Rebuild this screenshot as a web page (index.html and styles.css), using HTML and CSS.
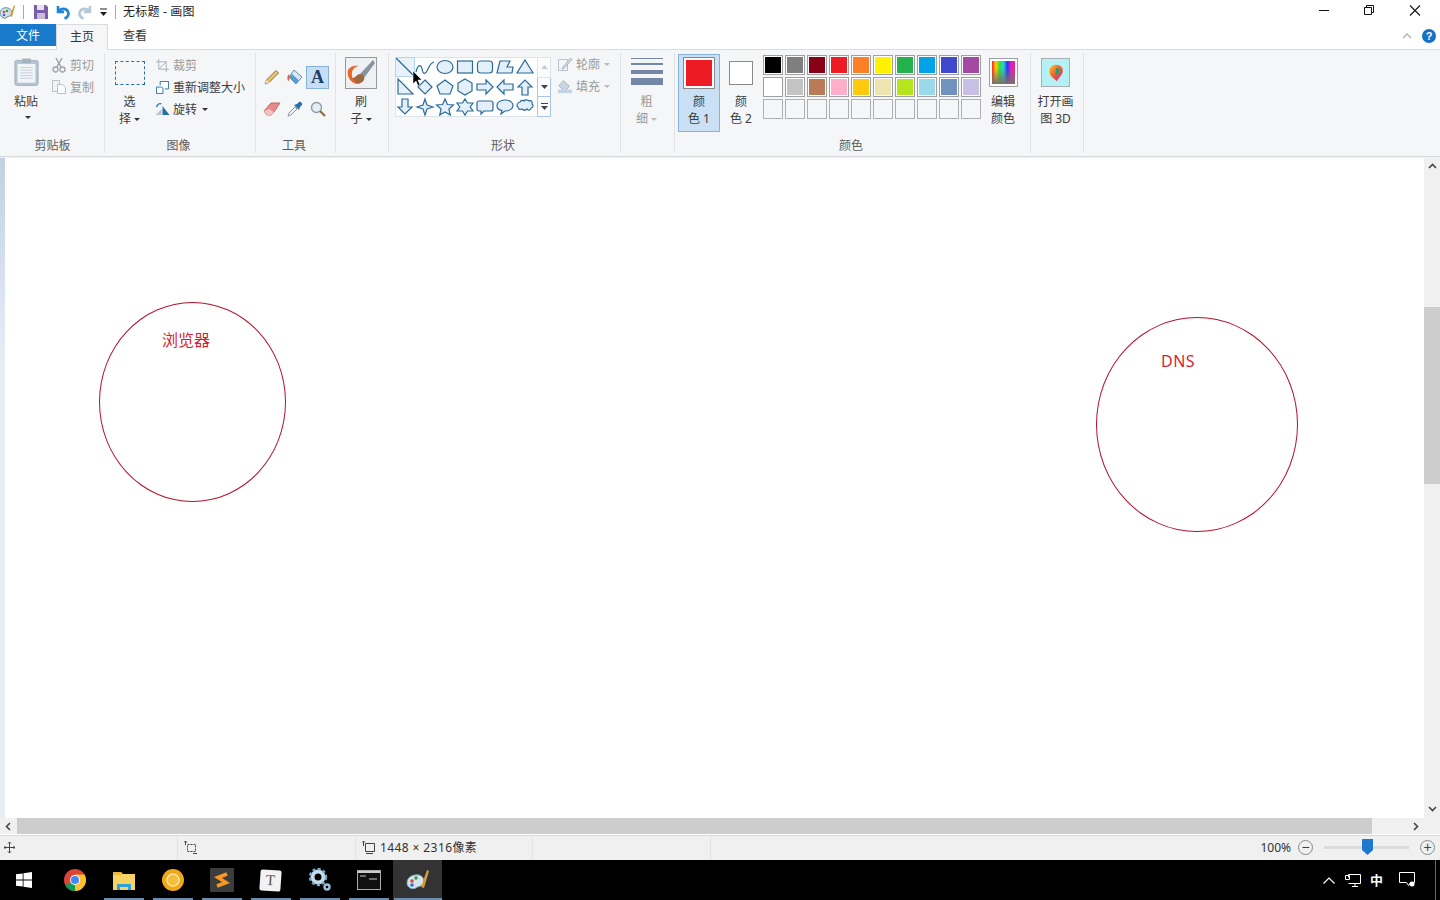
FILE: index.html
```html
<!DOCTYPE html>
<html lang="zh">
<head>
<meta charset="utf-8">
<title>无标题 - 画图</title>
<link rel="stylesheet" href="styles.css">
</head>
<body>
<div class="app">
  <header class="titlebar">
    <div class="qat">
      <svg class="ic-app" viewBox="0 0 18 18" width="18" height="18"><path d="M1 10c0-4 4-6 8-5 3 1 5 4 3 7-2 2-4 1-5 3-2 1-6-1-6-5z" fill="#cfe0e8" stroke="#5a8aa0"/><circle cx="5" cy="9" r="1.3" fill="#d84a3a"/><circle cx="8" cy="8" r="1.3" fill="#3a9a4a"/><circle cx="5" cy="12" r="1.3" fill="#3a6ad8"/><path d="M11 13l4-11 1 1-3 11z" fill="#d79a3a"/></svg>
      <span class="qat-sep first"></span>
      <svg viewBox="0 0 16 16" width="16" height="16"><path d="M1 1h12l2 2v12H1z" fill="#7a5fa8"/><path d="M4 1h7v5H4z" fill="#e8e2f0"/><path d="M4 9h8v6H4z" fill="#c9bcdc"/></svg>
      <svg viewBox="0 0 16 16" width="16" height="16"><path d="M3 2v6h6M3.500 7.500C6 4 11 4 13 7.500c1.500 3-.5 6-3.500 7" fill="none" stroke="#1e88d8" stroke-width="2.600"/></svg>
      <svg viewBox="0 0 16 16" width="16" height="16"><path d="M13 2v6H7M12.500 7.500C10 4 5 4 3 7.500c-1.500 3 .5 6 3.500 7" fill="none" stroke="#b4c8d8" stroke-width="2.600"/></svg>
      <svg viewBox="0 0 9 9" width="9" height="9"><path d="M1 1h7" stroke="#222"/><path d="M1 4h7L4.500 8z" fill="#222"/></svg>
      <span class="qat-sep"></span>
    </div>
    <div class="title-text">无标题 - 画图</div>
    <div class="win-btns">
      <svg viewBox="0 0 46 24" width="46" height="24"><path d="M19 10.500h10" stroke="#111"/></svg>
      <svg viewBox="0 0 46 24" width="46" height="24"><path d="M18.500 7.500h7v7h-7zM20.500 7.500v-2h7v7h-2" fill="none" stroke="#111"/></svg>
      <svg viewBox="0 0 46 24" width="46" height="24"><path d="M18 5.500l10 10M28 5.500l-10 10" stroke="#111" stroke-width="1.100"/></svg>
    </div>
  </header>

  <nav class="tabs">
    <div class="tab tab-file">文件</div>
    <div class="tab tab-active">主页</div>
    <div class="tab tab-view">查看</div>
    <div class="tabs-right">
      <svg viewBox="0 0 10 6" width="10" height="6"><path d="M1 5l4-4 4 4" fill="none" stroke="#aab4bc" stroke-width="1.400"/></svg>
      <span class="help">?</span>
    </div>
  </nav>

  <section class="ribbon">
    <div class="group g-clip">
      <div class="group-body clip-body">
        <div class="big-btn paste">
          <svg viewBox="0 0 28 32" width="25" height="30"><rect x="1" y="3" width="26" height="28" rx="2" fill="#b4c3d2" stroke="#a0aebb"/><rect x="4" y="7" width="20" height="21" fill="#f2f5f8"/><path d="M7 11h14M7 14h14M7 17h14M7 20h14M7 23h14" stroke="#c3ced8"/><rect x="9" y="1" width="10" height="5" rx="1" fill="#a5b3c0"/></svg>
          <span class="lbl">粘贴</span>
          <span class="caret solo"></span>
        </div>
        <div class="small-col clip-col">
          <div class="small-btn dim"><svg viewBox="-1 0 16 16" width="16" height="16"><path d="M4 1l5 9M10 1L5 10" stroke="#9aa4ad" stroke-width="1.500"/><circle cx="3.500" cy="12.500" r="2.500" fill="none" stroke="#9aa4ad" stroke-width="1.300"/><circle cx="10.500" cy="12.500" r="2.500" fill="none" stroke="#9aa4ad" stroke-width="1.300"/></svg><span>剪切</span></div>
          <div class="small-btn dim"><svg viewBox="0 0 16 16" width="16" height="16"><path d="M1.500 1.500h7v11h-7z" fill="#f0f2f4" stroke="#b8c0c8"/><path d="M6.500 5.500h5l3 3v6h-8z" fill="#fafbfc" stroke="#b8c0c8"/></svg><span>复制</span></div>
        </div>
      </div>
      <div class="group-name name-clip">剪贴板</div>
    </div>

    <div class="group g-image">
      <div class="group-body image-body">
        <div class="big-btn select">
          <span class="marquee"></span>
          <span class="lbl">选</span>
          <span class="lbl">择<i class="caret"></i></span>
        </div>
        <div class="small-col image-col">
          <div class="small-btn dim"><svg class="ic-narrow" viewBox="0 0 14 14" width="13" height="13"><path d="M3 0v11h11M0 3h11v11M3 11l8-8" fill="none" stroke="#a3b0bc"/></svg><span>裁剪</span></div>
          <div class="small-btn"><svg class="ic-narrow" viewBox="0 0 14 14" width="13" height="13"><path d="M.5 6.500h7v7h-7z" fill="#fff" stroke="#2a72b0"/><path d="M4.500 4.500v-4h9v8h-4" fill="#fff" stroke="#2a72b0"/></svg><span>重新调整大小</span></div>
          <div class="small-btn"><svg class="ic-wide" viewBox="0 0 16 14" width="17" height="14"><path d="M8 13V4l7 9z" fill="#2a6ea8"/><path d="M7 13V7l-6 6z" fill="#b8c4ce"/><path d="M2 5c1-3 3-4 5-3" fill="none" stroke="#2a6ea8" stroke-width="1.300"/></svg><span>旋转</span><i class="caret"></i></div>
        </div>
      </div>
      <div class="group-name">图像</div>
    </div>

    <div class="group g-tools">
      <div class="group-body tools-grid">
        <div class="tool"><svg viewBox="0 0 16 16" width="16" height="16"><path d="M1 15l1.500-4L12 1.500 14.500 4 5 13.500z" fill="#e9c46a" stroke="#7a6238" stroke-width=".9"/><path d="M1 15l1.500-4L5 13.500z" fill="#f4e2c4"/></svg></div>
        <div class="tool"><svg viewBox="0 0 18 18" width="18" height="18"><path d="M8 2l8 7-6 7-7-7z" fill="#dbe8f2" stroke="#6a8ea8"/><path d="M3 9l7 7 3-3.500L6 6z" fill="#5d9ad0"/><path d="M3 6c-2 2-2 5-1 7 1 0 2-2 1-7z" fill="#e0603a"/></svg></div>
        <div class="tool tool-on"><span class="a-glyph">A</span></div>
        <div class="tool"><svg viewBox="0 0 18 14" width="18" height="14"><path d="M1 9l7-8h9l-6 9-3 3H4z" fill="#e88a8a" stroke="#bb6a6a"/><path d="M1 9l3 4h4l3-3-5-3z" fill="#f2c4bc"/></svg></div>
        <div class="tool"><svg viewBox="0 0 16 16" width="16" height="16"><path d="M1 15l1-3 6-6 2 2-6 6z" fill="#eef2f6" stroke="#8a9aa8"/><path d="M7 4l5 5 1-3 2-2c1-2-2-4-3-3l-2 2z" fill="#2c6fa8"/></svg></div>
        <div class="tool"><svg viewBox="0 0 16 16" width="16" height="16"><circle cx="6.500" cy="6.500" r="5" fill="#e4eef6" stroke="#8a9aa8" stroke-width="1.300"/><path d="M10 10l5 5" stroke="#8a6a40" stroke-width="2"/></svg></div>
      </div>
      <div class="group-name">工具</div>
    </div>

    <div class="group g-brush">
      <div class="group-body brush-body">
        <div class="brush-tile"><svg viewBox="0 0 30 30" width="30" height="30"><rect width="30" height="30" fill="#eef0f2"/><path d="M14 16L27 2l2 3-11 15z" fill="#8a94a0"/><path d="M3 20C6 26 14 28 18 22c1-3-1-6-4-6-4 0-3 5-11 4z" fill="#9a6a40"/><path d="M2 12c-2 8 5 15 12 14-6-3-9-6-8-12 1-4 5-6 7-6-4-1-9 0-11 4z" fill="#e8662a"/></svg></div>
        <span class="lbl">刷</span>
        <span class="lbl">子<i class="caret"></i></span>
      </div>
      <div class="group-name">&nbsp;</div>
    </div>

    <div class="group g-shapes">
      <div class="group-body shapes-body">
        <div class="gallery">
          <div class="shape-grid">
            <div class="shape sel"><svg viewBox="0 0 20 20"><path d="M1 1l18 18" class="ln"/></svg></div>
            <div class="shape"><svg viewBox="0 0 20 20"><path d="M1 15c2-8 5-8 6-3s3 6 5 2 3-8 7-9" class="ln"/></svg></div>
            <div class="shape"><svg viewBox="0 0 20 20"><ellipse cx="10" cy="10" rx="8" ry="6.500" class="fl"/></svg></div>
            <div class="shape"><svg viewBox="0 0 20 20"><rect x="2.500" y="4" width="15" height="12" class="fl"/></svg></div>
            <div class="shape"><svg viewBox="0 0 20 20"><rect x="2.500" y="4" width="15" height="12" rx="3" class="fl"/></svg></div>
            <div class="shape"><svg viewBox="0 0 20 20"><path d="M5 4h10l-3 6h6l-1 6H2z" class="fl"/></svg></div>
            <div class="shape"><svg viewBox="0 0 20 20"><path d="M10 3l8 13H2z" class="fl"/></svg></div>
            <div class="shape"><svg viewBox="0 0 20 20"><path d="M3 2v15h15z" class="fl"/></svg></div>
            <div class="shape"><svg viewBox="0 0 20 20"><path d="M10 3l7 7-7 7-7-7z" class="fl"/></svg></div>
            <div class="shape"><svg viewBox="0 0 20 20"><path d="M10 3l8 6-3 8H5L2 9z" class="fl"/></svg></div>
            <div class="shape"><svg viewBox="0 0 20 20"><path d="M10 2l7 4v8l-7 4-7-4V6z" class="fl"/></svg></div>
            <div class="shape"><svg viewBox="0 0 20 20"><path d="M2 7h9V3l7 7-7 7v-4H2z" class="fl"/></svg></div>
            <div class="shape"><svg viewBox="0 0 20 20"><path d="M18 7H9V3l-7 7 7 7v-4h9z" class="fl"/></svg></div>
            <div class="shape"><svg viewBox="0 0 20 20"><path d="M7 18V10H3l7-7 7 7h-4v8z" class="fl"/></svg></div>
            <div class="shape"><svg viewBox="0 0 20 20"><path d="M7 2v8H3l7 7 7-7h-4V2z" class="fl"/></svg></div>
            <div class="shape"><svg viewBox="0 0 20 20"><path d="M10 2l2 6 6 2-6 2-2 6-2-6-6-2 6-2z" class="fl"/></svg></div>
            <div class="shape"><svg viewBox="0 0 20 20"><path d="M10 2l2.400 5.500 6 .5-4.500 4 1.400 6L10 15l-5.300 3 1.400-6L1.600 8l6-.5z" class="fl"/></svg></div>
            <div class="shape"><svg viewBox="0 0 20 20"><path d="M10 2l2.500 4H18l-2.800 4 2.800 4h-5.500L10 18l-2.500-4H2l2.800-4L2 6h5.500z" class="fl"/></svg></div>
            <div class="shape"><svg viewBox="0 0 20 20"><path d="M4 4h12a2 2 0 012 2v6a2 2 0 01-2 2H9l-3 3v-3H4a2 2 0 01-2-2V6a2 2 0 012-2z" class="fl"/></svg></div>
            <div class="shape"><svg viewBox="0 0 20 20"><path d="M10 3c5 0 8 2.500 8 5.500S15 14 10 14l-4 3 1-3.500C4 13 2 11 2 8.500 2 5.500 5 3 10 3z" class="fl"/></svg></div>
            <div class="shape"><svg viewBox="0 0 20 20"><path d="M5 5c1-2 3-2 4-1 1-2 4-1 5 0 2-1 4 1 3 3 2 1 1 4-1 4 0 2-3 3-4 1-2 2-4 1-5 0-2 1-4 0-4-2-2-1-1-4 2-5z" class="fl"/></svg></div>
          </div>
          <div class="gallery-scroll">
            <div class="gs gs-up"><svg viewBox="0 0 7 4" width="7" height="4"><path d="M3.500 0L7 4H0z" fill="#c4ccd4"/></svg></div>
            <div class="gs"><svg viewBox="0 0 7 4" width="7" height="4"><path d="M0 0h7L3.500 4z" fill="#444"/></svg></div>
            <div class="gs"><svg viewBox="0 0 7 7" width="7" height="7"><path d="M0 .5h7" stroke="#444"/><path d="M0 3h7L3.500 7z" fill="#444"/></svg></div>
          </div>
        </div>
        <div class="small-col shape-opts">
          <div class="small-btn dim"><svg viewBox="0 0 16 16" width="16" height="16"><path d="M1.500 3.500h9v11h-9z" fill="none" stroke="#b4c0cc"/><path d="M6 11l-1 2 2-.5 8-9-1.500-1.500z" fill="#d8dfe6" stroke="#a8b4c0"/></svg><span>轮廓</span><i class="caret dim-caret"></i></div>
          <div class="small-btn dim"><svg viewBox="0 0 18 16" width="16" height="16"><path d="M7 2l7 6-5 6-7-6z" fill="#c8d6e4" stroke="#a4b4c4"/><rect x="1" y="12" width="16" height="4" fill="#c4d2e2"/></svg><span>填充</span><i class="caret dim-caret"></i></div>
        </div>
      </div>
      <div class="group-name">形状</div>
    </div>

    <div class="group g-size">
      <div class="group-body size-body">
        <div class="size-lines"><i class="l1"></i><i class="l2"></i><i class="l3"></i><i class="l4"></i></div>
        <span class="lbl dim-text">粗</span>
        <span class="lbl dim-text">细<i class="caret dim-caret"></i></span>
      </div>
      <div class="group-name">&nbsp;</div>
    </div>

    <div class="group g-colors">
      <div class="group-body colors-body">
        <div class="color-big on">
          <span class="swatch-big sb1"><i></i></span>
          <span class="lbl">颜</span>
          <span class="lbl">色 1</span>
        </div>
        <div class="color-big">
          <span class="swatch-big sb2"><i></i></span>
          <span class="lbl">颜</span>
          <span class="lbl">色 2</span>
        </div>
        <div class="palette">
          <span class="c c01"></span><span class="c c02"></span><span class="c c03"></span><span class="c c04"></span><span class="c c05"></span><span class="c c06"></span><span class="c c07"></span><span class="c c08"></span><span class="c c09"></span><span class="c c10"></span>
          <span class="c c11"></span><span class="c c12"></span><span class="c c13"></span><span class="c c14"></span><span class="c c15"></span><span class="c c16"></span><span class="c c17"></span><span class="c c18"></span><span class="c c19"></span><span class="c c20"></span>
          <span class="c e"></span><span class="c e"></span><span class="c e"></span><span class="c e"></span><span class="c e"></span><span class="c e"></span><span class="c e"></span><span class="c e"></span><span class="c e"></span><span class="c e"></span>
        </div>
        <div class="edit-colors">
          <span class="rainbow"><i></i></span>
          <span class="lbl">编辑</span>
          <span class="lbl">颜色</span>
        </div>
      </div>
      <div class="group-name">颜色</div>
    </div>

    <div class="group g-3d">
      <div class="group-body p3d-body">
        <span class="p3d-tile"><svg viewBox="0 0 24 24" width="20" height="24"><defs><linearGradient id="p3d" x1="0" y1="0" x2="1" y2="1"><stop offset="0" stop-color="#f7d02c"/><stop offset=".45" stop-color="#f0642c"/><stop offset="1" stop-color="#c02ca0"/></linearGradient></defs><path d="M12 2c6 0 9 4 8 9-1 4-5 7-7 11-3-3-9-6-9-12 0-5 4-8 8-8z" fill="url(#p3d)"/><path d="M12 6c3 0 5 2 4 5-1 2-3 2-4 4z" fill="#2a9c6a"/></svg></span>
        <span class="lbl">打开画</span>
        <span class="lbl">图 3D</span>
      </div>
      <div class="group-name">&nbsp;</div>
    </div>
  </section>

  <main class="workspace">
    <div class="canvas-row">
      <div class="canvas-edge"></div>
      <div class="canvas">
        <div class="shape-circle circle-a"></div>
        <div class="shape-circle circle-b"></div>
        <div class="canvas-label label-a">浏览器</div>
        <div class="canvas-label label-b">DNS</div>
      </div>
      <div class="vscroll">
        <svg viewBox="0 0 9 6" width="9" height="6"><path d="M1 5l3.500-3.500L8 5" fill="none" stroke="#444" stroke-width="1.600"/></svg>
        <div class="vtrack"><div class="vthumb"></div></div>
        <svg viewBox="0 0 9 6" width="9" height="6"><path d="M1 1l3.500 3.500L8 1" fill="none" stroke="#444" stroke-width="1.600"/></svg>
      </div>
    </div>
    <div class="hscroll">
      <svg viewBox="0 0 6 9" width="6" height="9"><path d="M5 1L1.500 4.500 5 8" fill="none" stroke="#444" stroke-width="1.600"/></svg>
      <div class="htrack"><div class="hthumb"></div></div>
      <svg viewBox="0 0 6 9" width="6" height="9"><path d="M1 1l3.500 3.500L1 8" fill="none" stroke="#444" stroke-width="1.600"/></svg>
    </div>
  </main>

  <footer class="status">
    <div class="st st1"><svg viewBox="0 0 11 11" width="11" height="11"><path d="M5.500 0v11M0 5.500h11M4 1.500L5.500 0 7 1.500M4 9.500L5.500 11 7 9.500M1.500 4L0 5.500 1.500 7M9.500 4L11 5.500 9.500 7" fill="none" stroke="#444"/></svg></div>
    <div class="st st2"><svg viewBox="0 0 13 13" width="13" height="13"><path d="M3.500 3.500h8v7h-8z" fill="none" stroke="#444" stroke-dasharray="2 1"/><path d="M1.500 0v4M0 1.500L1.500 0 3 1.500M9 12.500h4" stroke="#444" fill="none"/></svg></div>
    <div class="st st3"><svg viewBox="0 0 13 13" width="13" height="13"><path d="M3.500 2.500h9v8h-9z" fill="none" stroke="#444"/><path d="M1.500 0v5M0 1.500L1.500 0 3 1.500M4 12.500h7" stroke="#444" fill="none"/></svg><span class="dims">1448 × 2316像素</span></div>
    <div class="st st4"></div>
    <div class="st st5"></div>
    <div class="zoom">
      <span class="zoom-val">100%</span>
      <span class="zbtn">−</span>
      <div class="zslider"><svg class="zthumb" viewBox="0 0 11 16" width="11" height="16"><path d="M0 0h11v11l-5.500 5L0 11z" fill="#1f78d0"/></svg></div>
      <span class="zbtn">+</span>
    </div>
  </footer>

  <div class="taskbar">
    <div class="tb start"><svg viewBox="0 0 16 16" width="16" height="16"><path d="M0 2.300l6.700-.9v6.200H0zM7.500 1.300L16 0v7.600H7.500zM0 8.400h6.700v6.200L0 13.700zM7.500 8.400H16V16l-8.500-1.200z" fill="#fff"/></svg></div>
    <div class="tb"><svg viewBox="0 0 22 22" width="22" height="22"><circle cx="11" cy="11" r="11" fill="#db4437"/><path d="M11 11L1.500 16.500A11 11 0 0 0 11 22z" fill="#0f9d58"/><path d="M11 22a11 11 0 0 0 11-11 11 11 0 0 0-1.500-5.500H11z" fill="#fbc02d"/><path d="M11 11l-9.500 5.500A11 11 0 0 0 9 21.800z" fill="#0f9d58"/><circle cx="11" cy="11" r="5" fill="#fff"/><circle cx="11" cy="11" r="4" fill="#4285f4"/></svg></div>
    <div class="tb run"><svg viewBox="0 0 22 20" width="22" height="20"><path d="M0 2h8l2 2h12v16H0z" fill="#f6d365"/><path d="M0 2h8l1 3H0z" fill="#e8b93a"/><path d="M4 20v-6h14v6h-3v-3H7v3z" fill="#2ba2dc"/></svg></div>
    <div class="tb run"><svg viewBox="0 0 22 22" width="22" height="22"><circle cx="11" cy="11" r="11" fill="#f0a818"/><circle cx="11" cy="11" r="6" fill="#f6bd3c" stroke="#fbe6a8" stroke-width="1.500"/></svg></div>
    <div class="tb run"><svg viewBox="0 0 24 24" width="24" height="24"><rect width="24" height="24" rx="1" fill="#3c3c3c"/><path d="M17 6L8 9.500l8 5L7 18" fill="none" stroke="#f89820" stroke-width="3.600"/></svg></div>
    <div class="tb run"><div class="typora">T</div></div>
    <div class="tb run"><svg viewBox="0 0 24 24" width="24" height="24"><circle cx="10" cy="9" r="5.500" fill="none" stroke="#c4dcec" stroke-width="4"/><circle cx="10" cy="9" r="8" fill="none" stroke="#7fa8c4" stroke-width="2.400" stroke-dasharray="3 2.300"/><circle cx="19" cy="19" r="2.500" fill="none" stroke="#9cc0d8" stroke-width="2.400"/></svg></div>
    <div class="tb run"><svg viewBox="0 0 24 20" width="24" height="20"><rect x=".5" y=".5" width="23" height="19" fill="#111" stroke="#aaa"/><rect x="1" y="1" width="22" height="2" fill="#ccc"/><path d="M3 6h6M12 9h8" stroke="#ccc"/></svg></div>
    <div class="tb run active"><svg viewBox="0 0 24 24" width="24" height="24"><path d="M1 15c0-6 6-9 12-8 4 1 6 5 4 9-2 3-5 2-7 4-3 2-9 0-9-5z" fill="#d4e4ec" stroke="#7ca0b4"/><circle cx="6" cy="13" r="1.800" fill="#d84a3a"/><circle cx="10" cy="10" r="1.800" fill="#3a9a4a"/><circle cx="6" cy="17" r="1.800" fill="#3a6ad8"/><path d="M15 19L21 2l2 1-5 17z" fill="#d79a3a"/></svg></div>
    <div class="tray">
      <svg viewBox="0 0 12 7" width="12" height="7"><path d="M.5 6.500L6 1l5.500 5.500" fill="none" stroke="#fff" stroke-width="1.200"/></svg>
      <svg viewBox="0 0 16 13" width="16" height="13"><path d="M3.500 3.500v-3h12v9h-12M.5 1.500h4v4h-4zM7 12.500h6M10 9.500v3" fill="none" stroke="#fff"/></svg>
      <span class="ime">中</span>
      <svg class="notif" viewBox="0 0 17 16" width="17" height="16"><path d="M.5.500h15v10h-4l-2 3-2-3h-7z" fill="none" stroke="#fff"/><circle cx="13" cy="12" r="2.500" fill="#fff"/></svg>
    </div>
  </div>

  <svg class="cursor" viewBox="0 0 11 17" width="11" height="17"><path d="M1 1v13l3-3 2 5 2-1-2-5h4z" fill="#000" stroke="#fff" stroke-width=".6"/></svg>
</div>
</body>
</html>
```

FILE: styles.css
```css
* { box-sizing: border-box; }
html, body { margin: 0; height: 100%; }
body { font-family: "Noto Sans", "Noto Sans CJK SC", "Liberation Sans", sans-serif; font-size: 12px; color: #3c3c3c; background: #fff; overflow: hidden; }
.app { position: relative; width: 1440px; height: 900px; display: flex; flex-direction: column; overflow: hidden; }

.titlebar { height: 24px; flex: none; display: flex; align-items: center; background: #fff; }
.qat { display: flex; align-items: center; gap: 6px; margin-left: -1px; }
.qat-sep { width: 1px; height: 14px; background: #a8a8a8; margin: 0 1px; }
.qat-sep.first { margin: 0 3px 0 0; }
.title-text { margin-left: 6px; color: #222; line-height: 22px; flex: 1; letter-spacing: .2px; }
.win-btns { display: flex; margin-right: 2px; }

.tabs { height: 26px; flex: none; display: flex; background: #fff; border-bottom: 1px solid #dadbdc; }
.tab { height: 26px; line-height: 24px; text-align: center; color: #333; }
.tab-file { width: 56px; height: 22px; background: #1979ca; color: #fff; }
.tab-active { width: 52px; background: #f5f6f7; border: 1px solid #dadbdc; border-bottom: 0; position: relative; }
.tab-view { width: 54px; }
.tabs-right { margin-left: auto; display: flex; align-items: center; gap: 10px; height: 24px; padding-right: 4px; }
.help { width: 14px; height: 14px; border-radius: 50%; background: #1770c4; color: #fff; font: bold 11px/14px "Liberation Sans", sans-serif; text-align: center; }

.ribbon { height: 107px; flex: none; display: flex; background: #f5f6f7; border-bottom: 1px solid #dadbdc; }
.group { flex: none; height: 100%; display: flex; flex-direction: column; position: relative; }
.group::after { content: ""; position: absolute; right: 0; top: 3px; bottom: 3px; width: 1px; background: #e2e3e4; }
.group-body { flex: 1; min-height: 0; }
.group-name { height: 20px; flex: none; line-height: 20px; text-align: center; color: #5c5c5c; padding-right: 4px; }
.name-clip { padding-right: 0; }
.lbl { display: block; line-height: 17px; text-align: center; color: #3c3c3c; white-space: nowrap; }
.dim-text { color: #9a9a9a; }

.caret { display: inline-block; width: 0; height: 0; border: 3px solid transparent; border-top: 3px solid #333; border-bottom: 0; margin-left: 3px; vertical-align: 2px; }
.caret.solo { display: block; margin: 6px auto 0; transform: translateX(2px); }
.dim-caret { border-top-color: #bbb; }

.small-col { display: flex; flex-direction: column; }
.small-btn { height: 22px; display: flex; align-items: center; gap: 3px; white-space: nowrap; color: #3c3c3c; }
.small-btn .caret { margin-left: 1px; }
.small-btn.dim { color: #9a9a9a; }

.g-clip { width: 105px; }
.clip-body { display: flex; padding-top: 7px; }
.big-btn { display: flex; flex-direction: column; align-items: center; }
.paste { width: 52px; }
.paste .lbl { margin-top: 6px; }
.clip-col { margin: -3px 0 0 -1px; }

.g-image { width: 151px; }
.image-body { display: flex; padding: 7px 0 0 9px; }
.select { width: 31px; }
.marquee { width: 30px; height: 24px; border: 1px dashed #2a6ea8; margin: 4px 0 8px; }
.image-col { margin: -3px 0 0 10px; }
.image-col .small-btn { gap: 4px; }
.ic-narrow { margin-left: 1px; }
.ic-wide { margin: 0 -2px 0 -1px; }

.g-tools { width: 80px; }
.tools-grid { display: grid; grid-template-columns: repeat(3, 23px); grid-auto-rows: 32px; justify-items: center; align-items: center; padding: 11px 0 0 4px; align-content: start; }
.tool { width: 23px; height: 23px; display: flex; align-items: center; justify-content: center; }
.tool-on { background: #c8dff3; border: 1px solid #86b3dc; }
.a-glyph { font: bold 18px/21px "Liberation Serif", serif; color: #1f3d66; }

.g-brush { width: 53px; }
.brush-body { display: flex; flex-direction: column; align-items: center; padding: 7px 3px 0 0; }
.brush-tile { width: 32px; height: 32px; border: 1px solid #9a9a9a; margin-bottom: 4px; display: block; overflow: hidden; }

.g-shapes { width: 232px; }
.shapes-body { display: flex; padding: 7px 0 0 6px; }
.gallery { display: flex; flex: none; width: 156px; height: 60px; background: #fff; border: 1px solid #dce3ea; }
.shape-grid { width: 142px; flex: none; display: grid; grid-template-columns: repeat(7, 20px); grid-auto-rows: 20px; align-content: start; margin: -1px 0 0 -1px; }
.shape { display: flex; align-items: center; justify-content: center; height: 20px; width: 20px; }
.shape svg { width: 20px; height: 20px; display: block; }
.shape.sel { background: #e8f2fb; outline: 1px solid #b6d2ec; outline-offset: -1px; }
.fl { fill: #e4f0f9; stroke: #2c6a98; stroke-width: 1.200; }
.ln { fill: none; stroke: #2c6a98; stroke-width: 1.200; }
.gallery-scroll { width: 14px; flex: none; display: flex; flex-direction: column; margin-top: -1px; height: 60px; }
.gs { flex: 1; border: 1px solid #a9c6e2; border-top-width: 0; background: #fbfcfd; display: flex; align-items: center; justify-content: center; }
.gs-up { border-color: #e0e4e8; border-top-width: 1px; }
.shape-opts { margin: -4px 0 0 6px; }

.g-size { width: 54px; }
.size-body { display: flex; flex-direction: column; align-items: center; padding: 8px 3px 0 0; }
.size-lines { width: 32px; height: 27px; display: flex; flex-direction: column; margin-bottom: 8px; }
.size-lines i { display: block; background: #7487a6; }
.l1 { height: 1px; }
.l2 { height: 2px; margin-top: 4px; }
.l3 { height: 4px; margin-top: 5px; }
.l4 { height: 7px; margin-top: 4px; }

.g-colors { width: 356px; }
.colors-body { display: flex; padding: 4px 0 0 3px; }
.color-big { width: 42px; height: 78px; display: flex; flex-direction: column; align-items: center; border: 1px solid transparent; padding-top: 2px; }
.color-big.on { background: #c9e0f5; border-color: #86b3dc; }
.swatch-big { display: block; border: 1px solid #8a8a8a; background: #fff; }
.swatch-big i { display: block; width: 100%; height: 100%; }
.sb1 { width: 32px; height: 32px; padding: 2px; margin-bottom: 4px; }
.sb1 i { background: #ed1c24; }
.sb2 { width: 24px; height: 24px; margin: 4px 0 8px; }
.palette { display: grid; grid-template-columns: repeat(10, 20px); grid-auto-rows: 20px; gap: 2px; margin-left: 1px; padding-top: 1px; align-content: start; }
.c { display: block; width: 20px; height: 20px; border: 1px solid #a0a0a0; box-shadow: inset 0 0 0 1px #fff; background: #f5f6f7; }
.e { box-shadow: none; border-color: #b0b0b0; }
.c01 { background: #000; } .c02 { background: #7f7f7f; } .c03 { background: #880015; } .c04 { background: #ed1c24; } .c05 { background: #ff7f27; } .c06 { background: #fff200; } .c07 { background: #22b14c; } .c08 { background: #00a2e8; } .c09 { background: #3f48cc; } .c10 { background: #a349a4; }
.c11 { background: #fff; } .c12 { background: #c3c3c3; } .c13 { background: #b97a57; } .c14 { background: #ffaec9; } .c15 { background: #ffc90e; } .c16 { background: #efe4b0; } .c17 { background: #b5e61d; } .c18 { background: #99d9ea; } .c19 { background: #7092be; } .c20 { background: #c8bfe7; }
.edit-colors { width: 44px; padding-top: 4px; display: flex; flex-direction: column; align-items: center; }
.rainbow { display: block; width: 29px; height: 29px; border: 1px solid #a0a0a0; padding: 2px; background: #fff; margin-bottom: 6px; }
.rainbow i { display: block; width: 100%; height: 100%; background: linear-gradient(to bottom, rgba(128,128,128,0) 30%, #77706a 100%), linear-gradient(to right, #ff2020, #ffd000, #30e030, #20d0e0, #3030f0, #e020d0, #ff2060); }

.g-3d { width: 53px; }
.p3d-body { display: flex; flex-direction: column; align-items: center; padding: 8px 4px 0 0; }
.p3d-tile { width: 29px; height: 29px; background: #b4f0f4; border: 1px solid #a8b0b4; display: flex; align-items: center; justify-content: center; margin-bottom: 6px; }

.workspace { flex: 1; min-height: 0; display: flex; flex-direction: column; background: #f0f0f0; padding-top: 1px; }
.canvas-row { flex: 1; min-height: 0; display: flex; }
.canvas-edge { width: 5px; flex: none; background: linear-gradient(to bottom, #c2d0e2, #e6edf7 30%, #e6edf7); }
.canvas { flex: 1; position: relative; background: #fff; }
.shape-circle { position: absolute; border: 1px solid #b5122e; border-radius: 50%; }
.circle-a { left: 94px; top: 144px; width: 187px; height: 200px; }
.circle-b { left: 1091px; top: 159px; width: 202px; height: 215px; }
.canvas-label { position: absolute; color: #d81e30; font-size: 16px; line-height: 22px; white-space: nowrap; }
.label-a { left: 157px; top: 171px; }
.label-b { left: 1156px; top: 192px; letter-spacing: .5px; }
.vscroll { width: 16px; flex: none; background: #f0f0f0; display: flex; flex-direction: column; align-items: center; justify-content: space-between; padding: 5px 0 6px; }
.vtrack { flex: 1; width: 16px; position: relative; margin: 5px 0; }
.vthumb { position: absolute; left: 0; right: 0; top: 133px; height: 177px; background: #cdcdcd; }
.hscroll { height: 16px; flex: none; display: flex; align-items: center; padding: 0 21px 0 5px; background: #f0f0f0; }
.htrack { flex: 1; height: 16px; position: relative; margin: 0 6px; }
.hthumb { position: absolute; left: 0; top: 0; bottom: 0; width: 1355px; background: #cdcdcd; }

.status { height: 25px; flex: none; display: flex; align-items: stretch; background: #f0f0f0; border-top: 1px solid #dadada; margin-top: 1px; color: #333; }
.st { display: flex; align-items: center; border-right: 1px solid #e2e2e2; padding-bottom: 2px; flex: none; }
.st1 { width: 178px; padding-left: 4px; }
.st2 { width: 178px; padding-left: 6px; }
.st3 { width: 177px; padding-left: 6px; gap: 5px; }
.dims { letter-spacing: .4px; }
.st4 { width: 178px; }
.st5 { flex: 1; border-right: 0; }
.zoom { width: 190px; display: flex; align-items: center; flex: none; padding-bottom: 2px; }
.zoom-val { width: 41px; text-align: right; margin-right: 7px; }
.zbtn { width: 15px; height: 15px; border: 1px solid #8a8a8a; border-radius: 50%; font: 14px/12px "Liberation Sans", sans-serif; text-align: center; color: #444; flex: none; }
.zslider { width: 85px; height: 3px; background: #dcdcdc; margin: 0 11px; position: relative; flex: none; }
.zthumb { position: absolute; left: 38px; top: -7px; }

.taskbar { height: 40px; flex: none; background: #000; display: flex; align-items: stretch; }
.tb { width: 49px; flex: none; display: flex; align-items: center; justify-content: center; position: relative; }
.start { width: 50px; justify-content: flex-start; padding-left: 16px; }
.run::after { content: ""; position: absolute; left: 5px; right: 4px; bottom: 0; height: 2px; background: #6a8db0; }
.active { background: #333; }
.active::after { left: 1px; right: 0; }
.typora { width: 21px; height: 21px; border-radius: 2px; background: #f2f2f2; color: #555; font: 15px/21px "Liberation Serif", serif; text-align: center; transform: rotate(4deg); }
.tray { margin: 0 4px 0 auto; display: flex; align-items: center; gap: 10px; padding-right: 19px; border-right: 1px solid #666; }
.ime { color: #fff; font-size: 13px; font-weight: 700; line-height: 16px; margin-left: -1px; }
.notif { margin-left: 6px; }

.cursor { position: absolute; left: 412px; top: 70px; }
```
